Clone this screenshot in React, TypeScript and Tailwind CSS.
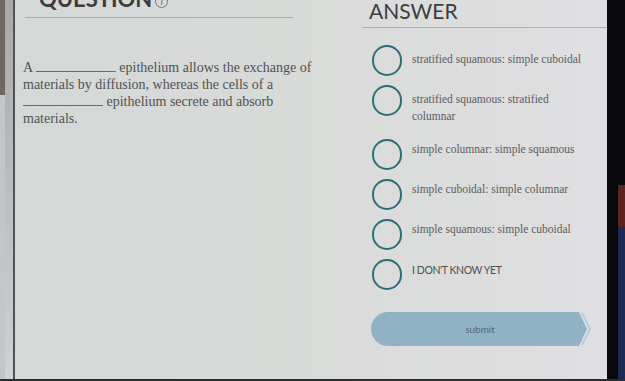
import React from 'react';

const serif = "font-['Liberation_Serif','Times_New_Roman',serif]";
const sans = "font-['Lato','Liberation_Sans',sans-serif]";

const options = [
  { label: 'stratified squamous: simple cuboidal', pt: 'pt-[6px]' },
  { label: 'stratified squamous: stratified columnar', pt: 'pt-[6px]', tall: true },
  { label: 'simple columnar: simple squamous', pt: 'pt-[2px]' },
  { label: 'simple cuboidal: simple columnar', pt: 'pt-[2px]' },
  { label: 'simple squamous: simple cuboidal', pt: 'pt-[2px]' },
  { label: "I DON'T KNOW YET", pt: 'pt-[3px]', caps: true },
];

const Radio = () => (
  <span className="w-[30px] h-[31px] shrink-0 rounded-full border-[2.5px] border-[#2d6d78]" />
);

const Blank = ({ w }: { w: string }) => (
  <span className={`inline-block ${w} border-b border-[#6b6b6b] align-baseline`} />
);

export default function App() {
  return (
    <div className="w-[625px] h-[381px] bg-[#0b0b0d] flex flex-col overflow-hidden">
      <div className="flex flex-1 min-h-0">
        {/* left bezel edge */}
        <div className="w-[15px] flex">
          <div className="w-[5px] flex flex-col">
            <div className="h-[95px] bg-[#6e6762]" />
            <div className="flex-1 bg-[#c3c6c8]" />
          </div>
          <div className="flex-1 bg-gradient-to-b from-[#a9a9a8] to-[#cfd1d2]" />
          <div className="w-[2px] bg-[#4e5356]" />
        </div>

        {/* screen */}
        <div className="flex-1 flex bg-gradient-to-r from-[#d4d8d6] via-[#d9dbd9] to-[#e0dfe2]">
          {/* question column */}
          <div className="w-[330px] flex flex-col">
            <div className="pl-[10px] pr-[52px]">
              <div className={`${sans} -mt-[12px] h-[22px] flex items-end gap-[3px] pl-[14px] text-[22px] font-bold text-[#3a3c3e] leading-none`}>
                <span>QUESTION</span>
                <span className="mb-[2px] w-[13px] h-[13px] rounded-full border border-[#777] text-[9px] italic font-normal flex items-center justify-center text-[#666]">i</span>
              </div>
              <div className="mt-[7px] h-px bg-[#a9acab]" />
            </div>
            <div className={`${serif} pl-[8px] pr-[8px] mt-[41px] text-[14px] leading-[17px] text-[#4f5153]`}>
              <p>
                A <Blank w="w-[80px]" /> epithelium allows the exchange of
                <br />
                materials by diffusion, whereas the cells of a
                <br />
                <Blank w="w-[80px]" /> epithelium secrete and absorb
                <br />
                materials.
              </p>
            </div>
          </div>

          {/* answer column */}
          <div className="flex-1 flex flex-col pl-[17px]">
            <div className={`${sans} pl-[7px] text-[21px] text-[#3b3d40] leading-none mt-[1px] h-[20px] flex items-end`}>
              ANSWER
            </div>
            <div className="mt-[6px] h-px bg-[#aeb0af]" />

            <div className="flex flex-col gap-[9px] mt-[17px] pl-[10px]">
              {options.map((o) => (
                <div key={o.label} className={`flex items-start gap-[10px] ${o.tall ? 'h-[45px]' : ''}`}>
                  <Radio />
                  <span
                    className={`${o.pt} ${o.caps ? `${sans} text-[10.5px] tracking-[-0.4px] text-[#4e5052]` : `${serif} text-[11.5px] text-[#5a5c5e]`} leading-[17px] w-[178px]`}
                  >
                    {o.label}
                  </span>
                </div>
              ))}
            </div>

            <div className="mt-[22px] pl-[9px] flex items-center">
              <div className={`${sans} w-[200px] h-[34px] rounded-l-[17px] bg-[#8fb2c5] flex items-center justify-center pl-[18px] text-[10px] text-[#5b6870]`}>
                submit
              </div>
              <svg width="26" height="34" viewBox="0 0 26 34" className="-ml-px">
                <polygon points="0,0 9,0 17,17 9,34 0,34" fill="#8fb2c5" />
                <polyline points="12,1 20,17 12,33" fill="none" stroke="#b9ccd7" strokeWidth="2" />
              </svg>
            </div>
          </div>
        </div>

        {/* right bezel */}
        <div className="w-[18px] flex">
          <div className="flex-1 bg-[#09090b]" />
          <div className="w-[7px] flex flex-col">
            <div className="h-[185px] bg-[#0a0a0c]" />
            <div className="h-[42px] bg-[#5a2420]" />
            <div className="flex-1 bg-[#1d2a52]" />
          </div>
        </div>
      </div>
      <div className="h-[2px] bg-[#2a2c2e]" />
    </div>
  );
}
